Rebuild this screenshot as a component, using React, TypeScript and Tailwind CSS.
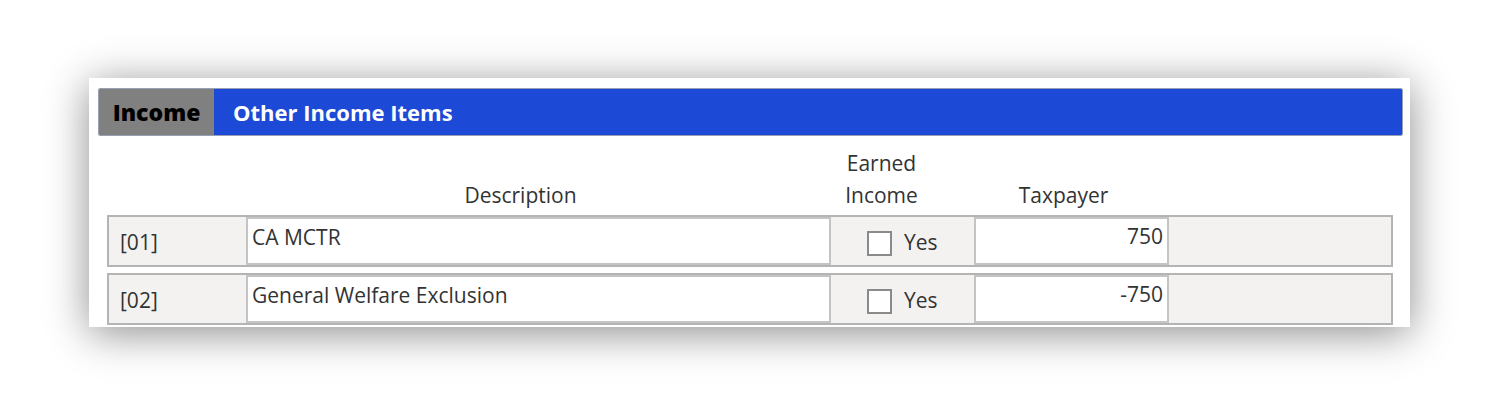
import React from "react";

const font = { fontFamily: '"Open Sans", "Noto Sans", "Liberation Sans", sans-serif' };

function Row({ num, desc, amount }: { num: string; desc: string; amount: string }) {
  return (
    <div className="flex h-[52px] w-[1286px] border-2 border-[#b4b4b4] bg-[#f3f2f1] text-[21px] text-[#333]">
      <div className="flex w-[137px] items-center pl-[11px] pt-[4px]">{num}</div>
      <div className="w-[585px] border-2 border-[#c4c4c4] bg-white pl-[4px] leading-[24px] pt-[6px]">{desc}</div>
      <div className="flex w-[143px] items-center pl-[36px] pt-[4px]">
        <div className="h-[25px] w-[25px] border-2 border-[#8a8a8a] bg-white" />
        <span className="ml-[12px]">Yes</span>
      </div>
      <div className="w-[195px] border-2 border-[#c4c4c4] bg-white pr-[4px] text-right leading-[24px] pt-[5px]">{amount}</div>
      <div className="flex-1" />
    </div>
  );
}

export default function App() {
  return (
    <div className="min-h-[407px] w-[1500px] bg-white pt-[78px] pl-[89px]" style={font}>
      <div className="h-[249px] w-[1321px] overflow-hidden bg-white pt-[10px] shadow-[0_6px_40px_rgba(0,0,0,0.45)]">
        <div className="ml-[9px] flex h-[48px] w-[1305px] overflow-hidden rounded-[2px] border border-[#9aa0b4]">
          <div className="flex w-[115px] items-center justify-center bg-[#808080] text-[23px] font-extrabold text-black">
            Income
          </div>
          <div className="flex flex-1 items-center bg-[#1c4ad6] pl-[19px] text-[22px] font-bold text-white">
            Other Income Items
          </div>
        </div>
        <div className="ml-[18px] flex h-[79px] w-[1286px] items-end pb-[4px] text-[21px] leading-[32px] text-[#333]">
          <div className="w-[139px]" />
          <div className="w-[585px] pr-[36px] text-center">Description</div>
          <div className="w-[143px] pr-[42px] text-center">
            Earned
            <br />
            Income
          </div>
          <div className="w-[195px] pr-[16px] text-center">Taxpayer</div>
        </div>
        <div className="ml-[18px] flex flex-col gap-[6px]">
          <Row num="[01]" desc="CA MCTR" amount="750" />
          <Row num="[02]" desc="General Welfare Exclusion" amount="-750" />
        </div>
      </div>
    </div>
  );
}
